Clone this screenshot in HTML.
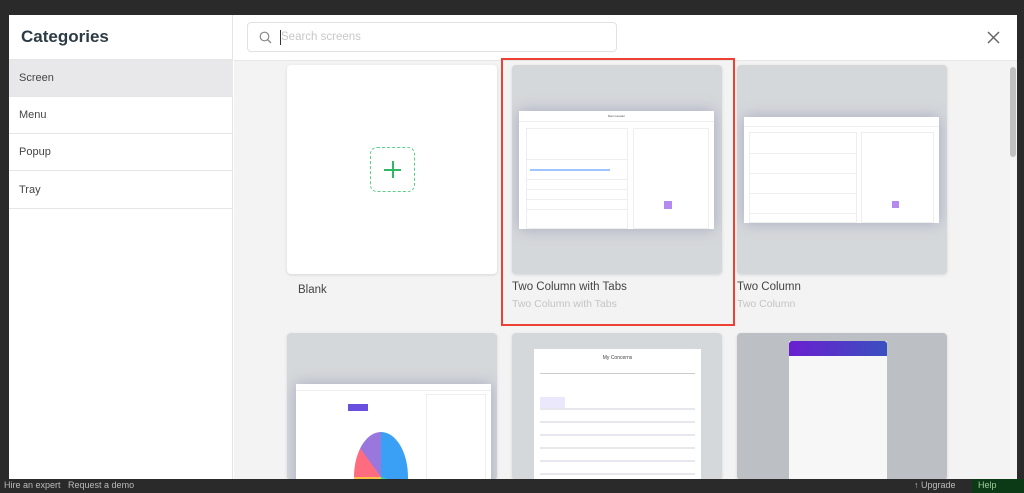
<!DOCTYPE html>
<html><head><style>
*{margin:0;padding:0;box-sizing:border-box}
html,body{width:1024px;height:493px;overflow:hidden}
body{background:#2a2a2a;position:relative;font-family:"Liberation Sans",sans-serif}
.a{position:absolute}
.modal{left:9px;top:15px;width:1008px;height:464px;background:#fff;overflow:hidden}
.side{left:0;top:0;width:224px;height:464px;border-right:1px solid #e4e4e4;background:#fff}
.cat{left:0;width:224px;height:37px;border-bottom:1px solid #e6e6e6;font-size:11px;color:#444;padding:12px 10px}
.main{left:225px;top:45px;width:783px;height:419px;background:#f3f3f3;border-top:1px solid #e6e6e6}
.card{width:210px;height:209px;border-radius:4px;background:#d5d8db;box-shadow:0 1px 3px rgba(0,0,0,.12);overflow:hidden}
.t1{font-size:11.5px;color:#444}
.t2{font-size:10.5px;color:#c4c4c4}
.shot{background:#fff;box-shadow:0 0 14px rgba(90,90,140,.35)}
.row{height:1px;background:#eee;position:absolute;left:0;right:0}
</style></head><body>
<div class="a modal">
 <div class="a side">
  <div class="a" style="left:12px;top:12px;font-size:17px;font-weight:bold;color:#2d3b45">Categories</div>
  <div class="a" style="left:0;top:44px;width:224px;border-top:1px solid #e6e6e6"></div>
  <div class="a cat" style="top:45px;background:#e8e8ea">Screen</div>
  <div class="a cat" style="top:82px">Menu</div>
  <div class="a cat" style="top:119px">Popup</div>
  <div class="a cat" style="top:157px">Tray</div>
 </div>
 <div class="a" style="left:238px;top:7px;width:370px;height:30px;border:1px solid #e2e2e2;border-radius:4px;background:#fff">
  <svg class="a" style="left:11px;top:8px" width="13" height="13" viewBox="0 0 13 13"><circle cx="5.5" cy="5.5" r="4.3" fill="none" stroke="#888" stroke-width="1.2"/><path d="M8.7 8.7L12 12" stroke="#888" stroke-width="1.3"/></svg>
  <div class="a" style="left:32px;top:7px;width:1px;height:15px;background:#333"></div>
  <div class="a" style="left:33px;top:8px;font-size:11.5px;color:#c8c8c8">Search screens</div>
 </div>
 <svg class="a" style="left:978px;top:16px" width="13" height="13" viewBox="0 0 13 13"><path d="M1 1L12 12M12 1L1 12" stroke="#666" stroke-width="1.5"/></svg>
 <div class="a main">
  <div class="a" style="right:1px;top:6px;width:6px;height:90px;background:#c1c1c1;border-radius:3px"></div>
  <div class="a card" style="left:53px;top:4px;background:#fff">
   <div class="a" style="left:83px;top:82px;width:45px;height:45px;border:1px dashed #5ccf8a;border-radius:7px"></div>
   <div class="a" style="left:97px;top:104px;width:17px;height:2px;background:#2fb865"></div>
   <div class="a" style="left:104.5px;top:96px;width:2px;height:17px;background:#2fb865"></div>
  </div>
  <div class="a t1" style="left:64px;top:223px">Blank</div>
  <div class="a" style="left:267px;top:-3px;width:234px;height:268px;border:2px solid #ee4136"></div>
  <div class="a card" style="left:278px;top:4px">
   <div class="a shot" style="left:7px;top:46px;width:195px;height:118px">
    <div class="a" style="left:0;top:0;right:0;height:11px;border-bottom:1px solid #eee;font-size:3px;text-align:center;color:#555;padding-top:3px">Main Header</div>
    <div class="a" style="left:7px;top:17px;width:102px;height:101px;border:1px solid #eee"><div class="a" style="left:3px;top:40px;width:80px;height:2px;background:#9ec5ff"></div><div class="row" style="top:30px"></div><div class="row" style="top:50px"></div><div class="row" style="top:60px"></div><div class="row" style="top:70px"></div><div class="row" style="top:80px"></div></div>
    <div class="a" style="left:114px;top:17px;width:76px;height:101px;border:1px solid #eee"><div class="a" style="left:30px;top:72px;width:8px;height:8px;background:#b58af0"></div></div>
   </div>
  </div>
  <div class="a t1" style="left:278px;top:220px">Two Column with Tabs</div>
  <div class="a t2" style="left:278px;top:237px">Two Column with Tabs</div>
  <div class="a card" style="left:503px;top:4px">
   <div class="a shot" style="left:7px;top:52px;width:195px;height:106px">
    <div class="a" style="left:0;top:0;right:0;height:10px;border-bottom:1px solid #eee"></div>
    <div class="a" style="left:5px;top:15px;width:108px;height:91px;border:1px solid #eee"><div class="row" style="top:20px"></div><div class="row" style="top:40px"></div><div class="row" style="top:60px"></div><div class="row" style="top:80px"></div></div>
    <div class="a" style="left:117px;top:15px;width:73px;height:91px;border:1px solid #eee"><div class="a" style="left:30px;top:68px;width:7px;height:7px;background:#b58af0"></div></div>
   </div>
  </div>
  <div class="a t1" style="left:503px;top:220px">Two Column</div>
  <div class="a t2" style="left:503px;top:237px">Two Column</div>
  <div class="a card" style="left:53px;top:272px;height:147px">
   <div class="a shot" style="left:9px;top:51px;width:195px;height:120px">
    <div class="a" style="left:0;top:0;right:0;height:7px;border-bottom:1px solid #eee"></div>
    <div class="a" style="left:52px;top:20px;width:20px;height:7px;background:#6a4ee0"></div>
    <div class="a" style="left:58px;top:48px;width:54px;height:90px;border-radius:50%;background:conic-gradient(#3aa0f5 0 30%,#31e0a0 30% 50%,#ffc04a 50% 75%,#ff6b7f 75% 90%,#9977dd 90%)"></div>
    <div class="a" style="left:130px;top:10px;width:60px;height:105px;border:1px solid #eee"></div>
   </div>
  </div>
  <div class="a card" style="left:278px;top:272px;height:147px">
   <div class="a shot" style="left:22px;top:16px;width:167px;height:140px;box-shadow:none">
    <div class="a" style="left:0;top:6px;width:167px;text-align:center;font-size:5px;color:#444">My Concerns</div>
    <div class="a" style="left:6px;top:24px;width:155px;height:1px;background:#ccc"></div>
    <div class="a" style="left:6px;top:48px;width:155px;height:80px;background:repeating-linear-gradient(#fff 0 11px,#e7e7ee 11px 13px)"></div>
    <div class="a" style="left:6px;top:48px;width:25px;height:11px;background:#ece8fb"></div>
   </div>
  </div>
  <div class="a card" style="left:503px;top:272px;height:147px;background:#bcc0c4">
   <div class="a" style="left:52px;top:8px;width:98px;height:210px;background:#f7f7f8"></div>
   <div class="a" style="left:52px;top:8px;width:98px;height:15px;background:linear-gradient(90deg,#6a1fcf,#3a4fc0);border-radius:3px 3px 0 0"></div>
  </div>
 </div>
</div>
<div class="a" style="left:4px;top:480px;font-size:9px;line-height:11px;color:#bbb">Hire an expert &nbsp; Request a demo</div>
<div class="a" style="left:914px;top:480px;font-size:9px;line-height:11px;color:#bbb">↑ Upgrade</div>
<div class="a" style="left:972px;top:479px;width:52px;height:14px;background:#0c3a16;font-size:9px;line-height:11px;color:#9c9;padding:1px 6px">Help</div>
</body></html>
